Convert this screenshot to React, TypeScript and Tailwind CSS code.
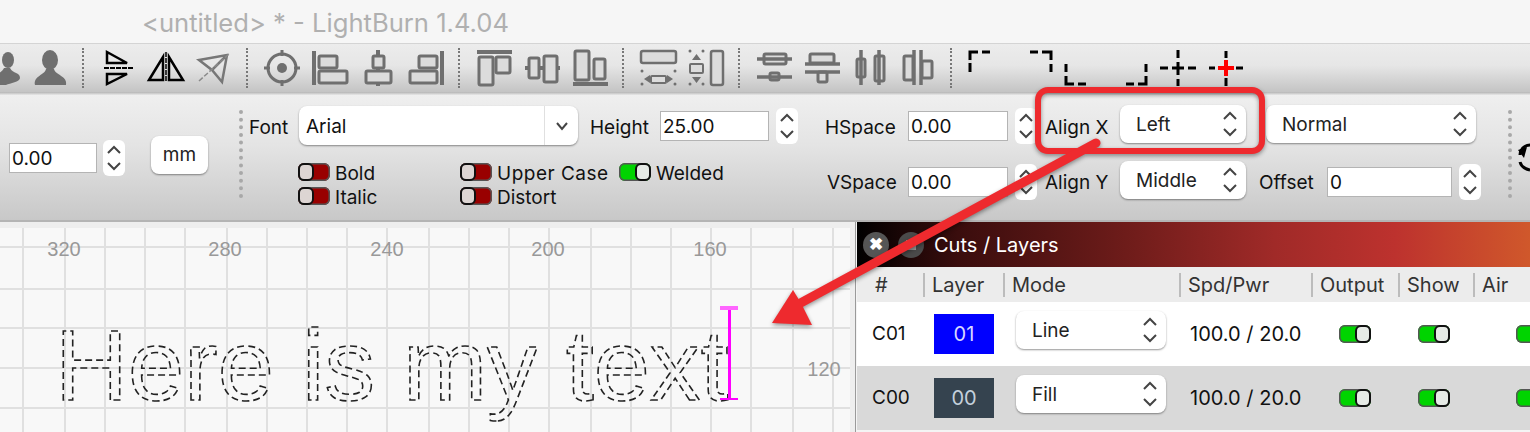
import React from "react";

const G = "#6f6f6f";

// toolbar icon, drawn in page coordinates so the paths stay easy to compare
const Tool = ({ x, w, children }: { x: number; w: number; children: React.ReactNode }) => (
  <svg width={w} height={48} viewBox={`${x} 44 ${w} 48`} className="shrink-0">
    {children}
  </svg>
);

const Sep = () => <div className="h-[40px] w-[2px] shrink-0 border-l-2 border-dotted border-[#777]" />;

const Box = (x: number, y: number, w: number, h: number) => (
  <rect x={x} y={y} width={w} height={h} rx={1.5} fill="#dcdcdc" stroke={G} strokeWidth={3} />
);

const Line = (x1: number, y1: number, x2: number, y2: number, c = G, sw = 4) => (
  <line x1={x1} y1={y1} x2={x2} y2={y2} stroke={c} strokeWidth={sw} />
);

const Toolbar = () => (
  <div className="flex h-[48px] items-center overflow-hidden bg-[linear-gradient(#ececec,#e6e6e6_45%,#c4c4c4)]">
    <Tool x={0} w={82}>
      <ellipse cx={8} cy={60} rx={6} ry={8} fill={G} />
      <path d="M-6 82C-6 74 2 73 4 68H10C13 74 20 72 20 78C20 82 10 83 6 85H-6Z" fill={G} />
      <ellipse cx={50} cy={60} rx={8} ry={10} fill={G} />
      <path d="M35 85C33 76 45 75 46 69H54C55 75 68 76 66 85Z" fill={G} />
    </Tool>
    <Sep />
    <Tool x={84} w={56}>
      <path d="M107 52L127 63H107ZM107 74H127L107 84Z" fill="none" stroke="#000" strokeWidth={2.5} />
      <line x1={104} y1={68} x2={133} y2={68} stroke="#000" strokeWidth={2} strokeDasharray="5 1" />
    </Tool>
    <Tool x={140} w={50}>
      <path d="M149 80L163 57V80ZM169 57L183 80H169Z" fill="none" stroke="#000" strokeWidth={2.5} />
      <line x1={166} y1={52} x2={166} y2={82} stroke="#000" strokeWidth={1.5} strokeDasharray="5 1" />
    </Tool>
    <Tool x={190} w={56}>
      <path d="M199 60L227 55L222 82L212 70ZM199 60L212 70L227 55" fill="none" stroke="#777" strokeWidth={2.5} />
      <line x1={199} y1={81} x2={229} y2={54} stroke="#8a8a8a" strokeWidth={1.5} strokeDasharray="5 2" />
    </Tool>
    <Sep />
    <Tool x={248} w={58}>
      <circle cx={282} cy={68} r={14} fill="none" stroke={G} strokeWidth={3} />
      <circle cx={282} cy={68} r={5} fill={G} />
      {Line(282, 50, 282, 56, G, 3)}
      {Line(282, 80, 282, 86, G, 3)}
      {Line(264, 68, 270, 68, G, 3)}
      {Line(294, 68, 300, 68, G, 3)}
    </Tool>
    <Tool x={306} w={52}>
      {Line(314, 51, 314, 85)}
      {Box(319, 56, 18, 12)}
      {Box(319, 71, 28, 12)}
    </Tool>
    <Tool x={358} w={44}>
      {Line(378, 50, 378, 86)}
      {Box(373, 56, 11, 12)}
      {Box(366, 71, 25, 12)}
    </Tool>
    <Tool x={402} w={56}>
      {Line(442, 51, 442, 85)}
      {Box(419, 56, 18, 12)}
      {Box(410, 71, 27, 12)}
    </Tool>
    <Sep />
    <Tool x={460} w={58}>
      {Line(477, 52, 512, 52)}
      {Box(479, 57, 14, 28)}
      {Box(496, 57, 14, 16)}
    </Tool>
    <Tool x={518} w={48}>
      {Line(525, 68, 560, 68)}
      {Box(529, 58, 10, 20)}
      {Box(544, 56, 13, 26)}
    </Tool>
    <Tool x={566} w={56}>
      {Line(573, 84, 608, 84)}
      {Box(575, 51, 14, 29)}
      {Box(594, 59, 11, 20)}
    </Tool>
    <Sep />
    <Tool x={624} w={58}>
      <rect x={641} y={51} width={35} height={12} rx={2} fill="#dcdcdc" stroke={G} strokeWidth={2.5} />
      <g fill={G}>
        <circle cx={642} cy={71} r={1.5} />
        <circle cx={675} cy={71} r={1.5} />
        <circle cx={642} cy={84} r={1.5} />
        <circle cx={675} cy={84} r={1.5} />
        <path d="M644 79L650 75V83ZM673 79L667 75V83Z" />
      </g>
      <rect x={651} y={76} width={15} height={7} rx={1} fill="#dcdcdc" stroke={G} strokeWidth={2} />
    </Tool>
    <Tool x={682} w={56}>
      <rect x={711} y={51} width={12} height={34} rx={2} fill="#dcdcdc" stroke={G} strokeWidth={2.5} />
      <g fill={G}>
        <circle cx={690} cy={51} r={1.5} />
        <circle cx={703} cy={51} r={1.5} />
        <circle cx={690} cy={84} r={1.5} />
        <circle cx={703} cy={84} r={1.5} />
        <path d="M696.5 54L692 60H701ZM696.5 83L692 77H701Z" />
      </g>
      <rect x={690} y={64} width={13} height={9} rx={1} fill="#dcdcdc" stroke={G} strokeWidth={2} />
    </Tool>
    <Sep />
    <Tool x={740} w={56}>
      {Box(764, 54, 22, 10)}
      {Line(757, 59, 792, 59, G, 3.5)}
      {Box(770, 73, 9, 7)}
      {Line(757, 77, 792, 77, G, 3.5)}
    </Tool>
    <Tool x={796} w={50}>
      {Box(810, 54, 24, 9)}
      {Line(805, 64, 840, 64, G, 3.5)}
      {Box(818, 72, 9, 10)}
      {Line(805, 72, 840, 72, G, 3.5)}
    </Tool>
    <Tool x={846} w={48}>
      {Box(857, 59, 8, 18)}
      {Line(861, 50, 861, 85, G, 3.5)}
      {Box(875, 56, 9, 25)}
      {Line(879, 50, 879, 85, G, 3.5)}
    </Tool>
    <Tool x={894} w={56}>
      {Box(904, 56, 9, 24)}
      {Line(914, 50, 914, 85, G, 3.5)}
      {Box(922, 61, 10, 17)}
      {Line(921, 50, 921, 85, G, 3.5)}
    </Tool>
    <Sep />
    <Tool x={952} w={70}>
      <path d="M970 72V52H978M982 52H990" fill="none" stroke="#000" strokeWidth={3} />
      <rect x={968} y={60} width={4} height={3} fill="#ddd" />
    </Tool>
    <Tool x={1022} w={38}>
      <path d="M1030 52H1038M1042 52H1051V60M1051 64V72" fill="none" stroke="#000" strokeWidth={3} />
    </Tool>
    <Tool x={1060} w={60}>
      <path d="M1066 64V72M1066 76V84H1074M1078 84H1086" fill="none" stroke="#000" strokeWidth={3} />
    </Tool>
    <Tool x={1120} w={36}>
      <path d="M1146 64V72M1146 76V84H1138M1134 84H1126" fill="none" stroke="#000" strokeWidth={3} />
    </Tool>
    <Tool x={1156} w={46}>
      <path d="M1178 50V58M1178 62V75M1178 79V86M1160 68H1168M1172 68H1184M1188 68H1196" fill="none" stroke="#000" strokeWidth={3} />
    </Tool>
    <Tool x={1202} w={50}>
      <path d="M1226 51V58M1226 78V86M1209 68H1215M1236 68H1243" fill="none" stroke="#000" strokeWidth={3} />
      <path d="M1226 60V76M1218 68H1234" fill="none" stroke="#f00" strokeWidth={4} />
    </Tool>
  </div>
);

const UpDown = ({ className = "" }: { className?: string }) => (
  <svg width={16} height={30} viewBox="0 0 16 30" className={className}>
    <path d="M2 10L8 4L14 10M2 20L8 26L14 20" fill="none" stroke="#444" strokeWidth={2} />
  </svg>
);

const Spinner = () => (
  <div className="flex h-[36px] w-[22px] shrink-0 items-center justify-center rounded-md bg-white">
    <UpDown />
  </div>
);

const Field = ({ value, className }: { value: string; className: string }) => (
  <div className={`flex h-[30px] shrink-0 items-center border border-[#b4b4b4] bg-white pt-[3px] pl-[2px] text-[#111] ${className}`}>
    {value}
  </div>
);

const Select = ({ label, className }: { label: string; className: string }) => (
  <div className={`flex h-[38px] shrink-0 items-center justify-between rounded-lg bg-white pr-2 pl-[16px] text-[#222] shadow-[0_1px_2px_#0000006b] ${className}`}>
    <span className="pt-[3px]">{label}</span>
    <UpDown />
  </div>
);

const Toggle = ({ on }: { on?: boolean }) =>
  on ? (
    <div className="flex h-[18px] w-[32px] shrink-0 items-center rounded-[6px] bg-[#00d400] shadow-[inset_0_0_0_1.5px_#555]">
      <div className="ml-auto h-[18px] w-[16px] rounded-[6px] border-2 border-[#111] bg-[#e6ebe6]" />
    </div>
  ) : (
    <div className="flex h-[18px] w-[32px] shrink-0 items-center rounded-[6px] bg-[#990000] shadow-[inset_0_0_0_1.5px_#555]">
      <div className="h-[18px] w-[16px] rounded-[6px] border-2 border-[#111] bg-[#ddd5d3]" />
    </div>
  );

const Dots = ({ className }: { className: string }) => (
  <div className={`mt-[15px] h-[88px] w-[4px] shrink-0 border-l-4 border-dotted border-[#a8a8a8] ${className}`} />
);

const Options = () => (
  <div className="flex h-[125px] bg-[linear-gradient(#efefef,#e4e4e4_40%,#c8c8c8)] pl-[9px] text-[19px] text-[#111]">
    <div className="flex items-center pt-[1px]">
      <Field value="0.00" className="w-[88px]" />
      <div className="ml-[6px]">
        <Spinner />
      </div>
      <div className="mb-[6px] ml-[26px] flex h-[38px] w-[57px] items-center justify-center rounded-lg bg-white text-[#222] shadow-[0_1px_2px_#0000006b]">
        mm
      </div>
    </div>
    <Dots className="ml-[31px]" />
    <div className="ml-[6px] flex w-[550px] shrink-0 flex-col pt-[11px]">
      <div className="flex h-[39px] items-center">
        <span className="w-[50px] pt-[6px]">Font</span>
        <div className="flex h-[39px] w-[279px] items-center justify-between rounded-lg bg-white pl-[7px] shadow-[0_1px_2px_#0000006b]">
          <span className="pt-[4px]">Arial</span>
          <div className="flex h-full w-[34px] items-center justify-center border-l border-[#e0e0e0]">
            <svg width={14} height={10} viewBox="0 0 14 10">
              <path d="M2 2L7 8L12 2" fill="none" stroke="#444" strokeWidth={2} />
            </svg>
          </div>
        </div>
        <span className="ml-[12px] w-[70px] pt-[6px]">Height</span>
        <Field value="25.00" className="w-[109px]" />
        <div className="ml-[7px]">
          <Spinner />
        </div>
      </div>
      <div className="mt-[18px] ml-[49px] grid grid-cols-[162px_160px_1fr] grid-rows-[24px_24px] leading-[22px]">
        <div className="flex gap-[5px]">
          <Toggle />
          <span>Bold</span>
        </div>
        <div className="flex gap-[5px]">
          <Toggle />
          <span className="tracking-[0.5px]">Upper Case</span>
        </div>
        <div className="-ml-[1px] flex gap-[5px]">
          <Toggle on />
          <span>Welded</span>
        </div>
        <div className="flex gap-[5px]">
          <Toggle />
          <span>Italic</span>
        </div>
        <div className="flex gap-[5px]">
          <Toggle />
          <span>Distort</span>
        </div>
      </div>
    </div>
    <div className="ml-[26px] grid shrink-0 grid-cols-[78px_100px_22px] grid-rows-[38px_38px] items-center gap-x-[6px] gap-y-[18px] pt-[10px]">
      <span className="mt-[8px]">HSpace</span>
      <Field value="0.00" className="mt-1 -ml-[1px] w-[100px]" />
      <div className="mt-1">
        <Spinner />
      </div>
      <span className="mt-[6px] ml-[2px]">VSpace</span>
      <Field value="0.00" className="mt-1 -ml-[1px] w-[100px]" />
      <div className="mt-1">
        <Spinner />
      </div>
    </div>
    <div className="ml-[8px] grid shrink-0 grid-cols-[75px_126px] grid-rows-[38px_38px] items-center gap-y-[18px] pt-[10px]">
      <span className="mt-[8px]">Align X</span>
      <Select label="Left" className="w-[126px]" />
      <span className="mt-[6px]">Align Y</span>
      <Select label="Middle" className="w-[126px]" />
    </div>
    <div className="ml-[13px] flex w-[223px] shrink-0 flex-col gap-[18px] pt-[10px]">
      <Select label="Normal" className="ml-[7px] w-[210px]" />
      <div className="flex h-[38px] items-center pt-1">
        <span className="w-[68px] pt-[2px]">Offset</span>
        <Field value="0" className="w-[125px]" />
        <div className="ml-[7px]">
          <Spinner />
        </div>
      </div>
    </div>
    <Dots className="ml-[26px]" />
    <svg width={14} height={30} viewBox="0 0 14 30" className="mt-[47px] ml-[6px] shrink-0">
      <path d="M12 3C6 3 2 8 2 13M2 20C3 24 7 27 12 28" fill="none" stroke="#000" strokeWidth={3} />
      <path d="M0 8L9 5L6 16Z" fill="#000" />
    </svg>
  </div>
);

const gridX = [23, 65, 105, 145, 185, 227, 267, 307, 347, 387, 429, 469, 509, 549, 591, 631, 671, 711, 751, 793, 833];
const gridY = [247, 289, 328, 368, 408];

const Canvas = () => (
  <div className="h-[210px] w-[856px] shrink-0 overflow-hidden bg-[#eeeeee]">
    <svg width={856} height={210} viewBox="0 222 856 210">
      <rect x={0} y={228} width={850} height={204} fill="#f8f8f8" />
      <rect x={855} y={222} width={1} height={210} fill="#9a9a9a" />
      {gridX.map((x) => (
        <rect key={x} x={x - 1} y={228} width={2} height={204} fill="#e0e0e0" />
      ))}
      {gridY.map((y) => (
        <rect key={y} x={0} y={y - 1} width={850} height={2} fill="#e0e0e0" />
      ))}
      <g fontFamily="'Liberation Sans', Arial, sans-serif" fontSize={20} fill="#999999" textAnchor="middle">
        <text x={64} y={256}>320</text>
        <text x={225} y={256}>280</text>
        <text x={387} y={256}>240</text>
        <text x={548} y={256}>200</text>
        <text x={710} y={256}>160</text>
        <text x={824} y={376}>120</text>
      </g>
      <text
        x={55}
        y={400}
        fontFamily="'Liberation Sans', Arial, sans-serif"
        fontSize={101}
        fill="none"
        stroke="#222"
        strokeWidth={1.6}
        strokeDasharray="7 4"
      >
        Here is my text
      </text>
      <rect x={728} y={308} width={3} height={91} fill="#ff00ff" />
      <rect x={720} y={306} width={18} height={4} fill="#ff66ff" />
      <rect x={720} y={398} width={18} height={2} fill="#ff00ff" />
    </svg>
  </div>
);

const HEAD = "grid h-[35px] grid-cols-[66px_80px_176px_132px_87px_75px_1fr] items-center bg-[#ececec] text-[20px] text-[#333]";
const ROW = "grid h-[64px] grid-cols-[66px_80px_176px_132px_87px_75px_1fr] items-center";

const headers = ["#", "Layer", "Mode", "Spd/Pwr", "Output", "Show", "Air"];

const LayerRow = ({ id, num, mode, swatch, dim }: { id: string; num: string; mode: string; swatch: string; dim?: boolean }) => (
  <div className={`${ROW} ${dim ? "bg-[#d9d9d9]" : "bg-white"}`}>
    <span className="pl-[15px] text-[#111]">{id}</span>
    <div className="pl-[11px]">
      <div className={`flex h-[40px] w-[60px] items-center justify-center text-[20px] ${swatch}`}>{num}</div>
    </div>
    <div className="pb-[8px] pl-[13px]">
      <Select label={mode} className="w-[150px]" />
    </div>
    <span className="pl-[11px] text-[20px] text-[#111]">100.0 / 20.0</span>
    <div className="pl-[28px]">
      <Toggle on />
    </div>
    <div className="pl-[20px]">
      <Toggle on />
    </div>
    <div className="pl-[43px]">
      <Toggle on />
    </div>
  </div>
);

const LayersPanel = () => (
  <div className="flex flex-1 flex-col overflow-hidden bg-[#f4f4f4] pl-[1px] text-[19px]">
    <div className="flex h-[45px] shrink-0 items-center bg-[linear-gradient(90deg,#000_0%,#3a0d0d_15%,#6e1c1a_40%,#a02a28_62%,#bd322e_80%,#d0582b_100%)] text-white">
      <div className="ml-[6px] flex h-[26px] w-[26px] items-center justify-center rounded-full bg-[#555] text-[17px] font-bold leading-none">
        ✖
      </div>
      <div className="ml-[9px] flex h-[26px] w-[26px] items-center justify-center rounded-full bg-[#4a4a4a]">
        <div className="h-[10px] w-[10px] bg-[#999]" />
      </div>
      <span className="ml-[10px] text-[20px]">Cuts / Layers</span>
    </div>
    <div className={HEAD}>
      {headers.map((h, i) => (
        <div key={h} className={`flex h-[24px] items-center ${i > 0 ? "border-l-2 border-[#bcbcbc] pl-[7px]" : "pl-[18px]"}`}>
          {h}
        </div>
      ))}
    </div>
    <LayerRow id="C01" num="01" mode="Line" swatch="bg-[#0000ff] text-[#d8d8ff]" />
    <LayerRow id="C00" num="00" mode="Fill" swatch="bg-[#35434f] text-[#c4d0dc]" dim />
  </div>
);

export default function App() {
  return (
    <div className="relative h-[432px] w-[1530px] overflow-hidden bg-[#f4f4f4] font-['Inter','Liberation_Sans',sans-serif]">
      <div className="flex h-[44px] items-center border-b border-[#d4d4d4] bg-[#f6f6f6] pt-[4px] pl-[142px] text-[25.6px] text-[#b0b0b0]">
        {"<untitled> * - LightBurn 1.4.04"}
      </div>
      <Toolbar />
      <div className="h-[3px] bg-[linear-gradient(#b4b4b4,#e8e8e8)]" />
      <Options />
      <div className="h-[2px] bg-[#b4b4b4]" />
      <div className="flex">
        <Canvas />
        <LayersPanel />
      </div>
      {/* red annotation drawn over the screenshot */}
      <svg width={1530} height={432} className="pointer-events-none absolute top-0 left-0 drop-shadow-[0_2px_2px_#00000066]">
        <rect x={1038} y={90} width={224} height={61} rx={10} fill="none" stroke="#ee2a2e" strokeWidth={6} />
        <line x1={1096} y1={143} x2={795} y2={306} stroke="#ee2a2e" strokeWidth={9} strokeLinecap="round" />
        <path d="M772 323L793 290L801 303L812 325Z" fill="#ee2a2e" />
      </svg>
    </div>
  );
}
